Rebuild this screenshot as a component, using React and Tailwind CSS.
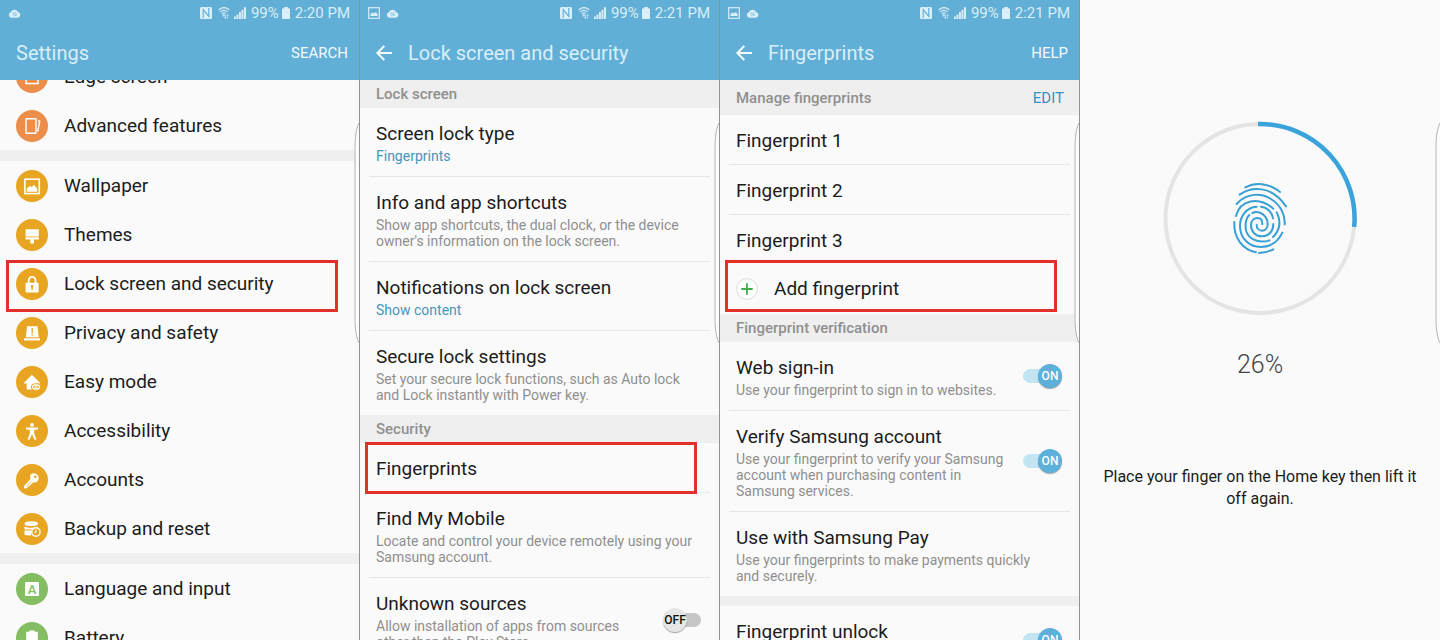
import React from "react";

/* ---------- status bar drawings ---------- */

const CloudIcon = () => (
  <svg width="13" height="9" viewBox="0 0 13 9" aria-hidden="true">
    <path d="M3.2 8.8a2.9 2.9 0 0 1-.4-5.6A3.9 3.9 0 0 1 10 3.1a2.9 2.9 0 0 1-.2 5.7z" fill="currentColor" />
    <path d="M4.4 5.4 5.600 3.700M5.600 3.900l2.400 2.800M8.600 4.800 7.600 6.600M5 6.800h1.300M7 3.500h1.200" fill="none" stroke="#61aed6" strokeWidth="0.8" />
  </svg>
);

const PictureIcon = () => (
  <svg width="12" height="12" viewBox="0 0 12 12" aria-hidden="true">
    <rect x="0.7" y="0.7" width="10.6" height="10.6" fill="none" stroke="currentColor" strokeWidth="1.2" />
    <path d="M2.4 9V7.2l2-1.6 1.6 1 1.6-1.6 2 2V9z" fill="currentColor" />
  </svg>
);

const NfcIcon = () => (
  <svg width="12" height="12" viewBox="0 0 12 12" aria-hidden="true">
    <rect width="12" height="12" rx="1.5" fill="currentColor" />
    <path d="M3.200 11V2.600L8.800 9.400V1" fill="none" stroke="#61aed6" strokeWidth="1.100" />
  </svg>
);

const WifiIcon = () => (
  <svg width="12" height="12" viewBox="0 0 12 12" fill="none" stroke="currentColor" aria-hidden="true">
    <path d="M.7 2.700Q6-1.300 11.300 2.700M2.200 4.700Q6 1.900 9.600 4.700M3.800 6.700Q5.800 5.100 7.600 6.500" strokeWidth="1.200" />
    <path d="M4.600 7.800h2.200L5.700 9.500z" fill="currentColor" strokeWidth="0.500" />
    <path d="M7.400 11.500V7.500M6.300 10.200l1.100 1.300 1.100-1.300M9.600 7.500v4M8.700 8.600l.9-1.100.9 1.100" strokeWidth="0.700" />
  </svg>
);

const SignalIcon = () => (
  <svg width="12" height="12" viewBox="0 0 12 12" fill="currentColor" aria-hidden="true">
    <path d="M0 9.500h1.900V12H0zM2.500 7.500h1.900V12H2.500zM5 5h1.900v7H5zM7.500 2.700h1.900V12H7.500zM10 .3h2V12h-2z" />
  </svg>
);

const BatteryIcon = () => (
  <svg width="8" height="12" viewBox="0 0 8 12" fill="currentColor" aria-hidden="true">
    <path d="M2.200 0h3.600v1.200H7a1 1 0 0 1 1 1V11a1 1 0 0 1-1 1H1a1 1 0 0 1-1-1V2.200a1 1 0 0 1 1-1h1.200z" />
  </svg>
);

const BackIcon = () => (
  <svg width="16" height="16" viewBox="0 0 16 16" fill="none" stroke="currentColor" strokeWidth="2" aria-hidden="true">
    <path d="M16 8H1.500M8.300 1 1.400 8l6.900 7" />
  </svg>
);

/* ---------- settings list drawings, each on a 32-unit disc ---------- */

const orange = "#ec8d4a";
const amber = "#e7a521";
const green = "#84bd62";

const glyphs = {
  edge: <rect x="10" y="8" width="12" height="14.500" fill="none" stroke="#fff" strokeWidth="1.500" />,
  advanced: (
    <g fill="none" stroke="#fff" strokeWidth="1.400">
      <rect x="10" y="8.700" width="10" height="14.600" rx="0.500" />
      <path d="M22 10.500l1.700.8-2 10.200" />
    </g>
  ),
  wallpaper: (
    <g>
      <rect x="8.900" y="9.200" width="14.400" height="14.400" fill="none" stroke="#fff" strokeWidth="1.600" />
      <path d="M10.800 21.800v-3.300l3.200-2.700 1.800 1.500 2-2.600 3.400 3.800v3.300z" fill="#fff" />
    </g>
  ),
  themes: (
    <g fill="#fff">
      <path d="M9.600 10.300h13.200v7.200H9.600zM9.600 18.200h13.200v2.400H18v4h-3.700v-4H9.600z" />
    </g>
  ),
  lock: (
    <g>
      <path d="M12.700 15.500v-3.300a3.400 3.400 0 0 1 6.800 0v3.300" fill="none" stroke="#fff" strokeWidth="1.800" />
      <rect x="9.600" y="14.800" width="13" height="9.800" rx="0.800" fill="#fff" />
      <path d="M14.700 18.300a1.400 1.400 0 1 1 2.100 1.200v2.600h-1.400v-2.600z" fill={amber} />
    </g>
  ),
  privacy: (
    <g>
      <path d="M11 9.300h10.500l1.200 11H9.800zM8 21.300h16v2.200H8z" fill="#fff" />
      <path d="M16.200 11v5.400M16.200 17.600v1.200" stroke={amber} strokeWidth="1.300" />
    </g>
  ),
  easy: (
    <g>
      <path d="M15.900 8.800 24 16.700v.9h-2.500v5.900H10.700v-5.900H8v-.9z" fill="#fff" />
      <rect x="15.400" y="17.800" width="9.200" height="6.400" rx="3.200" fill="#fff" stroke={amber} strokeWidth="1" />
      <path d="M17.300 21h5.400M18.700 19.600 17.300 21l1.400 1.400M21.300 19.600l1.400 1.400-1.400 1.400" fill="none" stroke={amber} strokeWidth="0.900" />
    </g>
  ),
  accessibility: (
    <g fill="#fff">
      <circle cx="16" cy="9.900" r="1.900" />
      <path d="M10 12.500h12v1.700l-3.800.7v3.500l2.200 5.900-1.700.6-2.700-5.700-2.700 5.700-1.700-.6 2.200-5.900v-3.500L10 14.200z" />
    </g>
  ),
  accounts: (
    <g>
      <path d="M14.200 11a4.800 4.800 0 1 1 5.500 7.500l-2-.2-7.500 6.200-2.300-.3.200-2.300 6.300-7z" fill="#fff" />
      <circle cx="19.300" cy="12.700" r="1.300" fill={amber} />
      <path d="M10 22.600l5-4.800" stroke={amber} strokeWidth="0.800" />
    </g>
  ),
  backup: (
    <g>
      <path d="M8.500 10.700c0-3.200 13.500-3.200 13.500 0s-13.500 3.200-13.500 0zM8.500 13.400c3 1.700 10.500 1.700 13.500 0v3H8.500zM8.500 17.600h6.500v4.800c-2.500.2-5-.2-6.500-1z" fill="#fff" />
      <circle cx="19.900" cy="19" r="4.200" fill={amber} stroke="#fff" strokeWidth="1.400" />
      <path d="M19.900 16.500V19l-1.500 1" fill="none" stroke="#fff" strokeWidth="1.200" />
    </g>
  ),
  language: (
    <g>
      <rect x="9" y="9" width="14" height="14" rx="1" fill="#fff" />
      <text x="16" y="20.800" textAnchor="middle" fontSize="13" fill={green} fontFamily="Roboto, sans-serif" fontWeight="500">A</text>
    </g>
  ),
  battery: <path d="M13.500 8.500h5v1.300h3.300V24H10.200V9.800h3.300z" fill="#fff" />,
};

const settings = [
  [
    { label: "Edge screen", icon: "edge", color: orange },
    { label: "Advanced features", icon: "advanced", color: orange },
  ],
  [
    { label: "Wallpaper", icon: "wallpaper", color: amber },
    { label: "Themes", icon: "themes", color: amber },
    { label: "Lock screen and security", icon: "lock", color: amber, marked: true },
    { label: "Privacy and safety", icon: "privacy", color: amber },
    { label: "Easy mode", icon: "easy", color: amber },
    { label: "Accessibility", icon: "accessibility", color: amber },
    { label: "Accounts", icon: "accounts", color: amber },
    { label: "Backup and reset", icon: "backup", color: amber },
  ],
  [
    { label: "Language and input", icon: "language", color: green },
    { label: "Battery", icon: "battery", color: green },
  ],
];

/* ---------- shared parts ---------- */

function EdgeHandle() {
  return (
    <svg className="pointer-events-none absolute top-[122px] right-0" width="5" height="222" viewBox="0 0 5 222" fill="none" aria-hidden="true">
      <path d="M5 1C2 7 1 16 1 26v170c0 10 1 19 4 25" fill="#fdfdfd" stroke="#b4b4b4" />
    </svg>
  );
}

function TopBar({ title, time, action, back }) {
  return (
    <header className="relative z-10 shrink-0 bg-[#61aed6] text-[#f3fbff]">
      <div className="flex h-[26px] items-center justify-between pr-[9px] pl-2 text-[15px] leading-5 text-[#d9effa]">
        <div className="flex items-center gap-[6px]">
          {back && <PictureIcon />}
          <CloudIcon />
        </div>
        <div className="flex items-center gap-[5px]">
          <span className="flex items-center gap-[6px]">
            <NfcIcon />
            <WifiIcon />
          </span>
          <span className="-ml-px flex items-center gap-[5px]">
            <SignalIcon />
            <span className="flex items-center gap-[3px]">
              99%
              <BatteryIcon />
            </span>
          </span>
          <span>{time}</span>
        </div>
      </div>
      <div className="flex h-[54px] items-center pr-[11px] pl-4">
        {back && (
          <button type="button" aria-label="Back" className="mr-4">
            <BackIcon />
          </button>
        )}
        <h1 className="flex-1 text-[20px] leading-6 text-[#d9effa]">{title}</h1>
        {action && (
          <button type="button" className="text-[15px] leading-5">
            {action}
          </button>
        )}
      </div>
    </header>
  );
}

function Phone({ children }) {
  return (
    <section className="relative flex min-w-0 flex-col overflow-hidden border-r border-[#8f9396]">
      {children}
      <EdgeHandle />
    </section>
  );
}

function SectionHeading({ children }) {
  return <h2 className="bg-[#efefef] px-4 py-1 text-[15px] leading-5 font-medium text-[#8f8f8f]">{children}</h2>;
}

const Band = () => <div className="h-[10px] shrink-0 bg-[#efefef]" />;

function Toggle({ id, label, on }) {
  return (
    <label htmlFor={id} className="relative flex h-6 w-[39px] shrink-0 items-center">
      <input id={id} type="checkbox" role="switch" aria-label={label} defaultChecked={on} className="peer sr-only" />
      <span className="ml-3 h-[14px] w-[26px] rounded-full bg-[#c6c6c6] peer-checked:ml-0 peer-checked:bg-[#c3e4f3]" />
      <span className="absolute top-0 left-0 flex size-6 items-center justify-center rounded-full bg-[#e6e6e6] text-[12px] leading-6 font-medium text-[#111] shadow-[0_1px_1px_rgba(0,0,0,0.35)] peer-checked:right-0 peer-checked:left-auto peer-checked:bg-[#5cb0da] peer-checked:text-white">
        {on ? "ON" : "OFF"}
      </span>
    </label>
  );
}

function Marker({ place }) {
  return <span className={`pointer-events-none absolute z-10 h-[52px] border-[3px] border-[#e3302b] ${place}`} />;
}

function Row({ title, note, link, toggle, on, marked, last }) {
  const id = title.toLowerCase().replace(/ /g, "-");
  return (
    <li className={`relative mx-[9px] flex items-center border-[#e6e6e6] ${last ? "" : "border-b"}`}>
      <button type="button" className={`min-w-0 flex-1 pt-[14px] pr-[14px] pl-[7px] text-left ${note ? "pb-3" : "pb-[11px]"}`}>
        <span className="block text-[19px] leading-6 text-[#1c1c1c]">{title}</span>
        {note && <span className={`mt-[2px] block text-[14px] leading-4 ${link ? "text-[#4596bd]" : "text-[#8f8f8f]"}`}>{note}</span>}
      </button>
      {toggle && (
        <div className="mr-2">
          <Toggle id={id} label={title} on={on} />
        </div>
      )}
      {marked && <Marker place="-top-px -left-1 right-[13px]" />}
    </li>
  );
}

/* ---------- the four screens ---------- */

function SettingsScreen() {
  return (
    <Phone>
      <TopBar title="Settings" time="2:20 PM" action="SEARCH" />
      <nav className="-mt-7">
        {settings.map((group, i) => (
          <React.Fragment key={i}>
            {i > 0 && <div className="h-[11px] bg-[#efefef]" />}
            <ul>
              {group.map((item) => (
                <li key={item.label} className="relative">
                  <a href="#" className="flex h-[49px] items-center gap-4 px-4 text-[19px] leading-6 text-[#1c1c1c]">
                    <svg width="32" height="32" viewBox="0 0 32 32" className="shrink-0" aria-hidden="true">
                      <circle cx="16" cy="16" r="16" fill={item.color} />
                      {glyphs[item.icon]}
                    </svg>
                    {item.label}
                  </a>
                  {item.marked && <Marker place="top-px left-[6px] right-[21px]" />}
                </li>
              ))}
            </ul>
          </React.Fragment>
        ))}
      </nav>
    </Phone>
  );
}

function LockScreen() {
  return (
    <Phone>
      <TopBar title="Lock screen and security" time="2:21 PM" back />
      <SectionHeading>Lock screen</SectionHeading>
      <ul>
        <Row title="Screen lock type" note="Fingerprints" link />
        <Row title="Info and app shortcuts" note="Show app shortcuts, the dual clock, or the device owner's information on the lock screen." />
        <Row title="Notifications on lock screen" note="Show content" link />
        <Row title="Secure lock settings" note="Set your secure lock functions, such as Auto lock and Lock instantly with Power key." last />
      </ul>
      <SectionHeading>Security</SectionHeading>
      <ul>
        <Row title="Fingerprints" marked />
        <Row title="Find My Mobile" note="Locate and control your device remotely using your Samsung account." />
        <Row title="Unknown sources" note="Allow installation of apps from sources other than the Play Store." toggle />
      </ul>
    </Phone>
  );
}

function FingerprintsScreen() {
  return (
    <Phone>
      <TopBar title="Fingerprints" time="2:21 PM" action="HELP" back />
      <div className="flex items-center justify-between bg-[#efefef] pt-2 pr-[15px] pb-[7px] pl-4 text-[15px] leading-5">
        <h2 className="font-medium text-[#8f8f8f]">Manage fingerprints</h2>
        <button type="button" className="text-[#3a91bb]">EDIT</button>
      </div>
      <ul>
        <Row title="Fingerprint 1" />
        <Row title="Fingerprint 2" />
        <Row title="Fingerprint 3" last />
      </ul>
      <div className="relative">
        <button type="button" className="flex h-[50px] w-full items-center gap-4 px-4 text-left text-[19px] leading-6 text-[#1c1c1c]">
          <svg width="22" height="22" viewBox="0 0 22 22" fill="none" aria-hidden="true">
            <circle cx="11" cy="11" r="10.400" fill="#fff" stroke="#dcdcdc" />
            <path d="M11 5.300v11.400M5.300 11h11.400" stroke="#3fae49" strokeWidth="1.800" />
          </svg>
          Add fingerprint
        </button>
        <Marker place="-top-1 left-[5px] right-[22px]" />
      </div>
      <SectionHeading>Fingerprint verification</SectionHeading>
      <ul>
        <Row title="Web sign-in" note="Use your fingerprint to sign in to websites." toggle on />
        <Row title="Verify Samsung account" note="Use your fingerprint to verify your Samsung account when purchasing content in Samsung services." toggle on />
        <Row title="Use with Samsung Pay" note="Use your fingerprints to make payments quickly and securely." last />
      </ul>
      <Band />
      <ul>
        <Row title="Fingerprint unlock" note="Unlock your device with your fingerprint." toggle on />
      </ul>
    </Phone>
  );
}

function ScanScreen() {
  return (
    <section className="relative flex min-w-0 flex-col items-center overflow-hidden pt-[120px] text-center">
      <svg width="196" height="196" viewBox="0 0 196 196" fill="none" role="img" aria-label="Scan progress">
        <circle cx="98" cy="98.500" r="94.500" stroke="#e4e4e4" strokeWidth="4" />
        <path d="M96 4H98A94.500 94.500 0 0 1 192.200 107" stroke="#3ba3dc" strokeWidth="4.500" />
        <g transform="translate(58 55) scale(0.3333)" stroke="#38a0d6" strokeWidth="6" strokeLinecap="round">
          <path d="M76 37C105 22 145 22 180 51" />
          <path d="M59 59C95 34 155 30 198 94" />
          <path d="M50 87C80 52 125 54 153 72C182 90 196 120 194 148" />
          <path d="M48 123C60 75 115 62 160 101" />
          <path d="M170 112C184 140 180 165 159 186" />
          <path d="M110 95C78 97 60 125 60 152C60 190 87 216 122 216C155 216 175 198 187 173" />
          <path d="M123 95C142 97 156 112 159 130" />
          <path d="M88 120C75 132 73 162 83 178C95 197 122 205 149 196" />
          <path d="M97 114C118 104 143 122 143 148C143 160 135 167 126 167C116 167 110 159 110 150" />
          <path d="M160 147C160 170 145 184 126 184C105 184 93 168 93 151C93 137 102 129 113 129C122 129 127 136 127 148" />
          <path d="M43 141C40 190 70 225 108 232" />
          <path d="M117 234Q140 234 160 223" />
        </g>
      </svg>
      <p className="mt-[33px] text-[25px] leading-8 font-light text-[#444]">26%</p>
      <p className="mt-[85px] px-5 text-[16px] leading-[22px] text-[#1c1c1c]">Place your finger on the Home key then lift it off again.</p>
      <EdgeHandle />
    </section>
  );
}

export default function App() {
  return (
    <main className="grid h-screen grid-cols-4 overflow-hidden bg-[#fafafa] font-[Roboto,sans-serif]">
      <SettingsScreen />
      <LockScreen />
      <FingerprintsScreen />
      <ScanScreen />
    </main>
  );
}
